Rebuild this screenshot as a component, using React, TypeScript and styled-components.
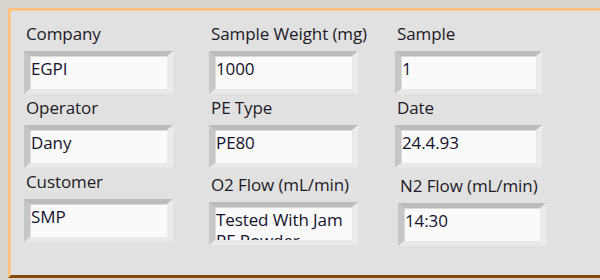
import React from "react";
import styled, { createGlobalStyle } from "styled-components";

const Global = createGlobalStyle`
  html, body { margin: 0; padding: 0; background: #d9d3ce; overflow: hidden; }
  body { width: 600px; height: 280px; }
`;

const Page = styled.div`
  padding: 8px 0 0 8px;
  width: 600px;
  height: 280px;
  box-sizing: border-box;
  overflow: hidden;
`;

const Panel = styled.div`
  width: 592px;
  height: 270px;
  box-sizing: border-box;
  background: #e1e1e1;
  border-top: 3px solid #ffc382;
  border-left: 3px solid #ffc382;
  border-bottom: 3px solid #84480f;
  padding: 13px 0 0 13px;
  display: grid;
  grid-template-columns: 185px 186px 186px;
  grid-auto-rows: 74px;
  align-content: start;
  font-family: "Open Sans", "Noto Sans", sans-serif;
  font-size: 17px;
`;

const Field = styled.div<{ $dx?: number; $dy?: number }>`
  display: flex;
  flex-direction: column;
  gap: 7px;
  margin-left: ${(p) => p.$dx ?? 0}px;
  margin-top: ${(p) => p.$dy ?? 0}px;
`;

const Label = styled.div`
  line-height: 20px;
  height: 20px;
  padding-left: 2px;
  color: #1d1a26;
  white-space: nowrap;
  letter-spacing: -0.1px;
`;

const Box = styled.div<{ $w?: number }>`
  width: ${(p) => p.$w ?? 149}px;
  height: 43px;
  box-sizing: border-box;
  border-style: solid;
  border-width: 5px 6px 5px 6px;
  border-top-color: #bcbcbc;
  border-left-color: #c6c6c6;
  border-right-color: #ebebeb;
  border-bottom-color: #e9e9e9;
  background: #fafafa;
  box-shadow: inset 1px 1px 0 #dadada;
  padding: 2px 2px 0 1px;
  overflow: hidden;
  color: #15122e;
  line-height: 21px;
  white-space: pre-line;
  letter-spacing: -0.1px;
`;

type F = { label: string; value: string; dx?: number; dy?: number; w?: number };

const fields: F[] = [
  { label: "Company", value: "EGPI" },
  { label: "Sample Weight (mg)", value: "1000" },
  { label: "Sample", value: "1", w: 147 },
  { label: "Operator", value: "Dany" },
  { label: "PE Type", value: "PE80" },
  { label: "Date", value: "24.4.93", w: 147 },
  { label: "Customer", value: "SMP" },
  { label: "O2 Flow (mL/min)", value: "Tested With Jam\nPE Powder", dy: 3 },
  { label: "N2 Flow (mL/min)", value: "14:30", dx: 3, dy: 4, w: 148 },
];

export default function App() {
  return (
    <>
      <Global />
      <Page>
        <Panel>
          {fields.map((f) => (
            <Field key={f.label} $dx={f.dx} $dy={f.dy}>
              <Label>{f.label}</Label>
              <Box $w={f.w}>{f.value}</Box>
            </Field>
          ))}
        </Panel>
      </Page>
    </>
  );
}
